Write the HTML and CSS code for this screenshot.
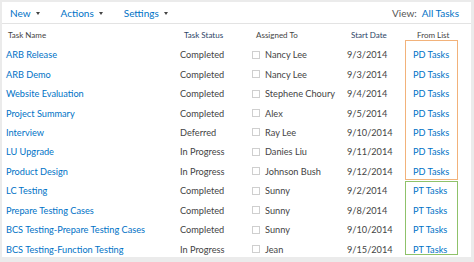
FILE: index.html
```html
<!DOCTYPE html>
<html>
<head>
<meta charset="utf-8">
<link rel="stylesheet" href="styles.css">
</head>
<body>
<div class="frame">
  <div class="toolbar">
    <span class="menu">New<i class="caret"></i></span>
    <span class="menu">Actions<i class="caret"></i></span>
    <span class="menu">Settings<i class="caret"></i></span>
    <span class="spacer"></span>
    <span class="view">View:</span>
    <span class="viewname">All Tasks</span>
  </div>
  <div class="grid">
    <div class="hd c1">Task Name</div>
    <div class="hd c2 sort">Task Status</div>
    <div class="hd c3">Assigned To</div>
    <div class="hd c4 sort">Start Date</div>
    <div class="hd c5">From List</div>

    <div class="c1 link">ARB Release</div><div class="c2">Completed</div><div class="c3"><i class="box"></i>Nancy Lee</div><div class="c4">9/3/2014</div><div class="c5 link">PD Tasks</div>
    <div class="c1 link">ARB Demo</div><div class="c2">Completed</div><div class="c3"><i class="box"></i>Nancy Lee</div><div class="c4">9/3/2014</div><div class="c5 link">PD Tasks</div>
    <div class="c1 link">Website Evaluation</div><div class="c2">Completed</div><div class="c3"><i class="box"></i>Stephene Choury</div><div class="c4">9/4/2014</div><div class="c5 link">PD Tasks</div>
    <div class="c1 link">Project Summary</div><div class="c2">Completed</div><div class="c3"><i class="box"></i>Alex</div><div class="c4">9/5/2014</div><div class="c5 link">PD Tasks</div>
    <div class="c1 link">Interview</div><div class="c2">Deferred</div><div class="c3"><i class="box"></i>Ray Lee</div><div class="c4">9/10/2014</div><div class="c5 link">PD Tasks</div>
    <div class="c1 link">LU Upgrade</div><div class="c2">In Progress</div><div class="c3"><i class="box"></i>Danies Liu</div><div class="c4">9/11/2014</div><div class="c5 link">PD Tasks</div>
    <div class="c1 link">Product Design</div><div class="c2">In Progress</div><div class="c3"><i class="box"></i>Johnson Bush</div><div class="c4">9/12/2014</div><div class="c5 link">PD Tasks</div>
    <div class="c1 link">LC Testing</div><div class="c2">Completed</div><div class="c3"><i class="box"></i>Sunny</div><div class="c4">9/2/2014</div><div class="c5 link">PT Tasks</div>
    <div class="c1 link">Prepare Testing Cases</div><div class="c2">Completed</div><div class="c3"><i class="box"></i>Sunny</div><div class="c4">9/8/2014</div><div class="c5 link">PT Tasks</div>
    <div class="c1 link">BCS Testing-Prepare Testing Cases</div><div class="c2">Completed</div><div class="c3"><i class="box"></i>Sunny</div><div class="c4">9/10/2014</div><div class="c5 link">PT Tasks</div>
    <div class="c1 link">BCS Testing-Function Testing</div><div class="c2">In Progress</div><div class="c3"><i class="box"></i>Jean</div><div class="c4">9/15/2014</div><div class="c5 link">PT Tasks</div>

    <div class="mark orange"></div>
    <div class="mark green"></div>
  </div>
</div>
</body>
</html>
```
FILE: styles.css
```css
html, body {
  margin: 0;
  padding: 0;
  background: #ebebeb;
  width: 474px;
  height: 262px;
  overflow: hidden;
  font-family: Lato, "Open Sans", sans-serif;
}
.frame {
  margin: 2px 3px 0 2px;
  background: #fff;
  height: 255px;
  overflow: hidden;
}
.toolbar {
  display: flex;
  align-items: center;
  height: 21px;
  border-bottom: 1px solid #e3e3e3;
  padding-left: 8px;
  padding-right: 12px;
  font-size: 10px;
  color: #0072c6;
}
.menu { margin-right: 21px; white-space: nowrap; display: flex; align-items: center; }
.caret {
  display: inline-block;
  width: 0;
  height: 0;
  border-left: 2px solid transparent;
  border-right: 2px solid transparent;
  border-top: 3px solid #444;
  margin-left: 5px;
  margin-top: 1px;
}
.spacer { flex: 1; }
.view { color: #555; margin-right: 5px; }
.viewname { color: #0072c6; }
.grid {
  position: relative;
  display: grid;
  grid-template-columns: 178px 72px 95px 66px 1fr;
  grid-template-rows: 21px repeat(11, 19.45px);
  font-size: 9.2px;
  color: #444;
  white-space: nowrap;
}
.grid > div { display: flex; align-items: center; }
.hd { font-size: 8px; color: #444; padding-top: 1px; }
.hd.sort { color: #2b4466; }
.c1 { padding-left: 4px; }
.hd.c1 { padding-left: 6px; }
.hd.c2 { padding-left: 4px; }
.hd.c3 { padding-left: 4px; }
.hd.c4 { padding-left: 4px; }
.hd.c5 { padding-left: 4px; }
.link { color: #0072c6; }
.box {
  display: inline-block;
  width: 6px;
  height: 6px;
  border: 1px solid #cfcfcf;
  margin-right: 5px;
}
.mark {
  position: absolute;
  left: 403px;
  width: 51px;
  border: 1px solid;
}
.mark.orange { top: 16px; height: 138px; border-color: #f2b27a; }
.mark.green { top: 157px; height: 72px; border-color: #8fc26a; }
```
